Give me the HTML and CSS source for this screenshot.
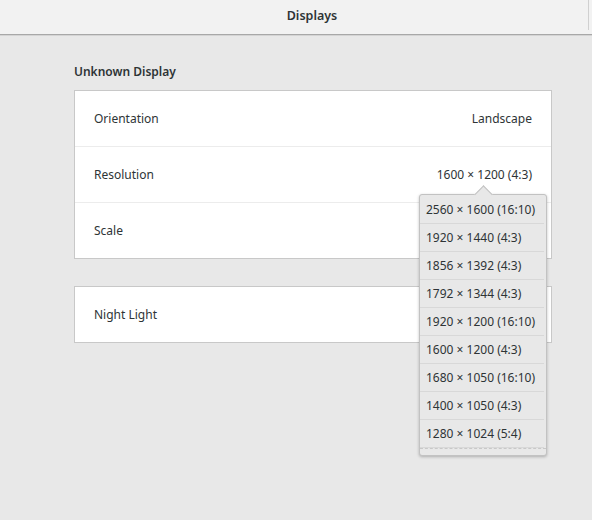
FILE: index.html
```html
<!DOCTYPE html>
<html>
<head>
<meta charset="utf-8">
<link rel="stylesheet" href="styles.css">
</head>
<body>
<header class="headerbar">
  <div class="title">Displays</div>
  <div class="edge"></div>
</header>
<main class="content">
  <div class="section">
    <h2 class="section-title">Unknown Display</h2>
    <div class="card">
      <div class="row"><span>Orientation</span><span>Landscape</span></div>
      <div class="row resolution"><span>Resolution</span><span class="value">1600 × 1200 (4:3)</span>
        <div class="popover">
          <div class="arrow"></div>
          <ul class="list">
            <li>2560 × 1600 (16:10)</li>
            <li>1920 × 1440 (4:3)</li>
            <li>1856 × 1392 (4:3)</li>
            <li>1792 × 1344 (4:3)</li>
            <li>1920 × 1200 (16:10)</li>
            <li>1600 × 1200 (4:3)</li>
            <li>1680 × 1050 (16:10)</li>
            <li>1400 × 1050 (4:3)</li>
            <li>1280 × 1024 (5:4)</li>
          </ul>
          <div class="more"></div>
        </div>
      </div>
      <div class="row"><span>Scale</span><span></span></div>
    </div>
    <div class="card second">
      <div class="row"><span>Night Light</span><span></span></div>
    </div>
  </div>
</main>
</body>
</html>
```

FILE: styles.css
```css
html, body {
  margin: 0;
  padding: 0;
}
body {
  width: 592px;
  height: 520px;
  background: #e8e8e8;
  font-family: "Noto Sans", "DejaVu Sans", sans-serif;
  font-size: 12px;
  color: #2e3436;
  overflow: hidden;
}
.headerbar {
  height: 34px;
  background: #f2f2f2;
  border-bottom: 1px solid #a8a8a8;
  box-shadow: 0 1px 0 #d4d4d4;
  display: flex;
  align-items: center;
  justify-content: center;
  position: relative;
}
.title {
  font-weight: 600;
  font-size: 12.5px;
  padding-left: 32px;
  margin-top: -3px;
}
.edge {
  position: absolute;
  right: 3px;
  top: 0;
  width: 1px;
  height: 30px;
  background: #d0d0d0;
}
.content {
  padding: 29px 40px 0 74px;
}
.section-title {
  margin: 0 0 10px 0;
  font-size: 12px;
  font-weight: 600;
  line-height: 16px;
}
.card {
  background: #fff;
  border: 1px solid #c8c8c8;
}
.card.second {
  margin-top: 27px;
}
.row {
  height: 55px;
  display: flex;
  align-items: center;
  justify-content: space-between;
  padding: 0 19px;
  border-top: 1px solid #ececec;
  position: relative;
}
.row:first-child {
  border-top: none;
}
.popover {
  position: absolute;
  right: 4px;
  top: 47px;
  width: 126px;
  background: #e8e8e8;
  border: 1px solid #c2c2c2;
  border-radius: 3px;
  box-shadow: 0 1px 3px rgba(0,0,0,0.25);
  z-index: 2;
}
.arrow {
  position: absolute;
  top: -7px;
  left: 57px;
  width: 12px;
  height: 12px;
  background: #e8e8e8;
  border-left: 1px solid #c2c2c2;
  border-top: 1px solid #c2c2c2;
  transform: rotate(45deg);
}
.list {
  list-style: none;
  margin: 0;
  padding: 0 2px 0 0;
  position: relative;
}
.list li {
  height: 27px;
  line-height: 27px;
  padding-left: 6px;
  border-bottom: 1px solid #d8d8d8;
  white-space: nowrap;
}
.list li:first-child {
  height: 28px;
  line-height: 29px;
}
.more {
  height: 6px;
  border-top: 1px dashed #c8c8c8;
}
```
